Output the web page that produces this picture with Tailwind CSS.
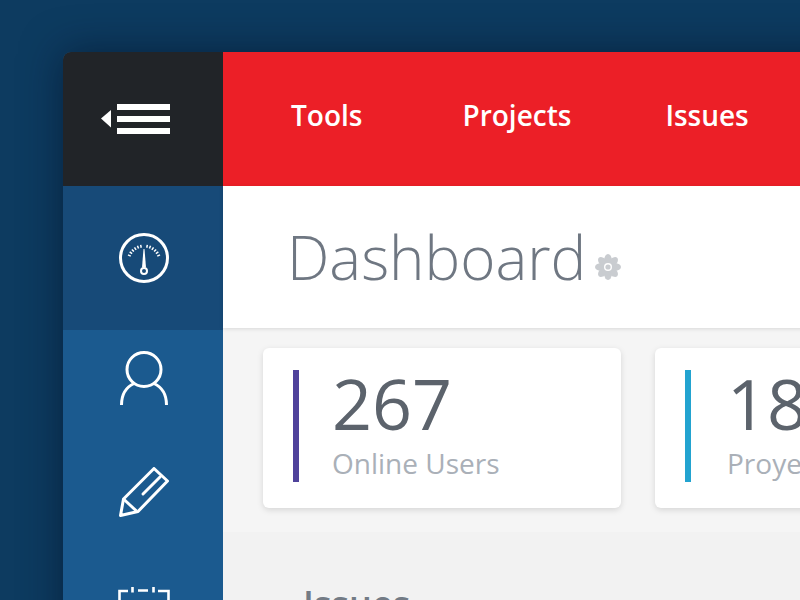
<!DOCTYPE html>
<html>
<head>
<meta charset="utf-8">
<script src="https://cdn.jsdelivr.net/npm/@tailwindcss/browser@4"></script>
</head>
<body class="m-0 h-[600px] w-[800px] overflow-hidden bg-[#0c3a5f] font-['Open_Sans',sans-serif]">
<div class="h-[600px] w-[800px] overflow-hidden pl-[63px] pt-[52px] bg-[#0d3b60]">
  <div class="flex h-[600px] w-[800px] overflow-hidden rounded-tl-lg shadow-[0_0_40px_rgba(0,15,35,0.55)]">
    <aside class="flex w-[160px] shrink-0 flex-col bg-[#1b5a8f]">
      <div class="flex h-[134px] items-center justify-center bg-[#212428]">
        <svg class="ml-[-14px]" width="70" height="32" viewBox="0 0 70 32">
          <path d="M0 15.500 L10 7 V24.500 Z" fill="#fff"/>
          <rect x="16" y="1" width="53" height="6" fill="#fff"/>
          <rect x="16" y="13" width="53" height="6" fill="#fff"/>
          <rect x="16" y="25" width="53" height="6" fill="#fff"/>
        </svg>
      </div>
      <div class="flex h-[144px] items-center justify-center bg-[#174a78]">
        <svg class="ml-[2px]" width="50" height="50" viewBox="0 0 50 50" fill="none" stroke="#fff">
          <circle cx="25" cy="25" r="23.500" stroke-width="3"/>
          <g stroke-width="1.500">
            <line x1="25" y1="11.500" x2="25" y2="14.500" transform="rotate(-66 25 29)"/>
            <line x1="25" y1="11.500" x2="25" y2="14.500" transform="rotate(-55 25 29)"/>
            <line x1="25" y1="11.500" x2="25" y2="14.500" transform="rotate(-44 25 29)"/>
            <line x1="25" y1="11.500" x2="25" y2="14.500" transform="rotate(-33 25 29)"/>
            <line x1="25" y1="11.500" x2="25" y2="14.500" transform="rotate(-22 25 29)"/>
            <line x1="25" y1="11.500" x2="25" y2="14.500" transform="rotate(-11 25 29)"/>
            <line x1="25" y1="11.500" x2="25" y2="14.500" transform="rotate(11 25 29)"/>
            <line x1="25" y1="11.500" x2="25" y2="14.500" transform="rotate(22 25 29)"/>
            <line x1="25" y1="11.500" x2="25" y2="14.500" transform="rotate(33 25 29)"/>
            <line x1="25" y1="11.500" x2="25" y2="14.500" transform="rotate(44 25 29)"/>
            <line x1="25" y1="11.500" x2="25" y2="14.500" transform="rotate(55 25 29)"/>
            <line x1="25" y1="11.500" x2="25" y2="14.500" transform="rotate(66 25 29)"/>
          </g>
          <path d="M23 34.500 L24.500 16 L25.500 16 L27 34.500 Z" fill="#fff" stroke="none"/>
          <circle cx="25" cy="38" r="3" stroke-width="2"/>
        </svg>
      </div>
      <div class="flex h-[112px] items-start justify-center pt-[21px]">
        <svg class="ml-[2px]" width="50" height="54" viewBox="0 0 50 54" fill="none" stroke="#fff" stroke-width="3">
          <circle cx="25" cy="18.500" r="17"/>
          <path d="M2.500 54 C2.500 43 7.500 36 15 32.500 M47.500 54 C47.500 43 42.500 36 35 32.500"/>
        </svg>
      </div>
      <div class="flex h-[112px] items-start justify-center pt-[25px]">
        <svg class="ml-[4px]" width="52" height="52" viewBox="0 0 52 52" fill="none" stroke="#fff" stroke-width="3" stroke-linejoin="round">
          <path d="M35 1.500 L48.500 14 L19 44.500 L1.500 48.500 L4.500 32 Z"/>
          <path d="M4.500 32 L17.500 44"/>
          <path d="M24 27 L41 10" stroke-linecap="round"/>
        </svg>
      </div>
      <div class="flex flex-1 items-start justify-center pt-[33px]">
        <svg class="ml-[1px]" width="52" height="30" viewBox="0 0 52 30" fill="none" stroke="#fff" stroke-width="2.600">
          <path d="M1.500 30 V4 H10 M14.500 0 V5.500 M20 3.500 H30 M35.500 0 V5.500 M40 4 H50.500 V30"/>
        </svg>
      </div>
    </aside>
    <main class="flex min-w-0 flex-1 flex-col bg-[#f5f5f5]">
      <nav class="flex h-[134px] shrink-0 items-center bg-[#ec1f27] pb-[8px] pl-[68px] text-[28px] font-semibold text-white">
        <span class="leading-none">Tools</span>
        <span class="ml-[100px] leading-none">Projects</span>
        <span class="ml-[94px] leading-none">Issues</span>
      </nav>
      <header class="flex h-[142px] shrink-0 items-center bg-white pl-[64px] shadow-[0_1px_4px_rgba(0,0,0,0.12)]">
        <h1 class="text-[60px] font-light leading-none text-[#6f7782]">Dashboard</h1>
        <svg class="ml-[9px] mt-[20px]" width="26" height="26" viewBox="0 0 26 26">
          <g fill="#c9ccd0">
            <ellipse cx="13" cy="6" rx="3.800" ry="6"/>
            <ellipse cx="13" cy="6" rx="3.800" ry="6" transform="rotate(45 13 13)"/>
            <ellipse cx="13" cy="6" rx="3.800" ry="6" transform="rotate(90 13 13)"/>
            <ellipse cx="13" cy="6" rx="3.800" ry="6" transform="rotate(135 13 13)"/>
            <ellipse cx="13" cy="6" rx="3.800" ry="6" transform="rotate(180 13 13)"/>
            <ellipse cx="13" cy="6" rx="3.800" ry="6" transform="rotate(225 13 13)"/>
            <ellipse cx="13" cy="6" rx="3.800" ry="6" transform="rotate(270 13 13)"/>
            <ellipse cx="13" cy="6" rx="3.800" ry="6" transform="rotate(315 13 13)"/>
            <circle cx="13" cy="13" r="6"/>
          </g>
          <circle cx="13" cy="13" r="4" fill="#fff"/>
          <circle cx="13" cy="13" r="2.600" fill="#c9ccd0"/>
        </svg>
      </header>
      <section class="flex h-[204px] shrink-0 items-start gap-[34px] pl-[40px] pt-[20px]">
        <div class="flex h-[160px] w-[358px] shrink-0 items-start rounded-md bg-white pl-[30px] pt-[22px] shadow-[0_2px_6px_rgba(0,0,0,0.13)]">
          <div class="h-[112px] w-[6px] bg-[#4f429b]"></div>
          <div class="ml-[33px]">
            <div class="mt-[-3px] text-[70px] leading-[72px] text-[#5c636c]">267</div>
            <div class="mt-[7px] text-[28px] leading-[34px] text-[#aab0b8]">Online Users</div>
          </div>
        </div>
        <div class="flex h-[160px] w-[358px] shrink-0 items-start rounded-md bg-white pl-[30px] pt-[22px] shadow-[0_2px_6px_rgba(0,0,0,0.13)]">
          <div class="h-[112px] w-[6px] bg-[#22a3d0]"></div>
          <div class="ml-[36px]">
            <div class="mt-[-3px] text-[70px] leading-[72px] text-[#5c636c]">18</div>
            <div class="mt-[7px] text-[28px] leading-[34px] text-[#aab0b8]">Proyectos</div>
          </div>
        </div>
      </section>
      <section class="flex-1 bg-[#f2f2f2] pl-[80px] pt-[54px]">
        <h2 class="text-[36px] font-semibold leading-none text-[#737b85]">Issues</h2>
      </section>
    </main>
  </div>
</div>
</body>
</html>
